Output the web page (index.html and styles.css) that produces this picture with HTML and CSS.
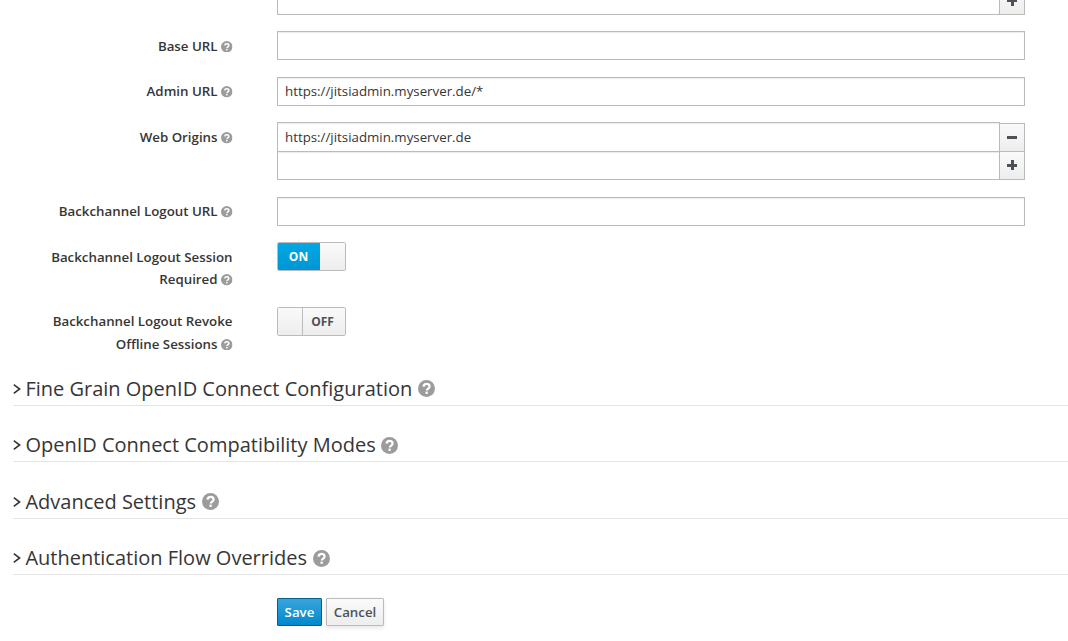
FILE: index.html
```html
<!DOCTYPE html>
<html lang="en">

<head>
    <meta charset="UTF-8">
    <title>Client settings</title>
    <link rel="stylesheet" href="styles.css">
</head>

<body>
    <svg class="defs" width="0" height="0">
        <symbol id="help" viewBox="0 0 24 24">
            <circle cx="12" cy="12" r="12" fill="#9c9c9c" />
            <path d="M7.8 9.3C8.1 6.9 9.8 5.6 12.1 5.6c2.4 0 4.2 1.4 4.2 3.5 0 1.6-.9 2.4-2 3.1-1.1.7-1.7 1.2-1.7 2.5" fill="none" stroke="#fff" stroke-width="3.2" />
            <rect x="10.6" y="16.4" width="3.2" height="3.2" fill="#fff" />
        </symbol>
        <symbol id="chevron" viewBox="0 0 8 10">
            <path d="M.8.7l5.8 4.3-5.8 4.3" fill="none" stroke="#363636" stroke-width="1.6" />
        </symbol>
    </svg>

    <form class="client_form">
        <div class="form_row row_first">
            <div class="form_label"></div>
            <div class="form_field">
                <div class="multi_line">
                    <input class="text_input" type="text">
                    <button class="line_btn" type="button"><span class="icon_plus"></span></button>
                </div>
            </div>
        </div>

        <div class="form_row row_base">
            <label class="form_label">Base URL <svg class="help"><use href="#help" /></svg></label>
            <div class="form_field"><input class="text_input" type="text"></div>
        </div>

        <div class="form_row">
            <label class="form_label">Admin URL <svg class="help"><use href="#help" /></svg></label>
            <div class="form_field"><input class="text_input" type="text" value="https://jitsiadmin.myserver.de/*"></div>
        </div>

        <div class="form_row">
            <label class="form_label">Web Origins <svg class="help"><use href="#help" /></svg></label>
            <div class="form_field">
                <div class="multi_line">
                    <input class="text_input input_raised" type="text" value="https://jitsiadmin.myserver.de">
                    <button class="line_btn" type="button"><span class="icon_minus"></span></button>
                </div>
                <div class="multi_line">
                    <input class="text_input" type="text">
                    <button class="line_btn" type="button"><span class="icon_plus"></span></button>
                </div>
            </div>
        </div>

        <div class="form_row row_last_input">
            <label class="form_label">Backchannel Logout URL <svg class="help"><use href="#help" /></svg></label>
            <div class="form_field"><input class="text_input" type="text"></div>
        </div>

        <div class="form_row row_toggle row_toggle_first">
            <label class="form_label">Backchannel Logout Session Required <svg class="help"><use href="#help" /></svg></label>
            <div class="form_field">
                <div class="toggle">
                    <span class="toggle_on">ON</span>
                    <span class="toggle_knob"></span>
                </div>
            </div>
        </div>

        <div class="form_row row_toggle">
            <label class="form_label">Backchannel Logout Revoke Offline Sessions <svg class="help"><use href="#help" /></svg></label>
            <div class="form_field">
                <div class="toggle">
                    <span class="toggle_knob knob_left"></span>
                    <span class="toggle_off">OFF</span>
                </div>
            </div>
        </div>

        <h2 class="section_title"><svg class="chevron"><use href="#chevron" /></svg>Fine Grain OpenID Connect Configuration <svg class="help_big"><use href="#help" /></svg></h2>
        <h2 class="section_title"><svg class="chevron"><use href="#chevron" /></svg>OpenID Connect Compatibility Modes <svg class="help_big"><use href="#help" /></svg></h2>
        <h2 class="section_title"><svg class="chevron"><use href="#chevron" /></svg>Advanced Settings <svg class="help_big"><use href="#help" /></svg></h2>
        <h2 class="section_title"><svg class="chevron"><use href="#chevron" /></svg>Authentication Flow Overrides <svg class="help_big"><use href="#help" /></svg></h2>

        <div class="form_buttons">
            <button class="btn btn_save" type="button">Save</button>
            <button class="btn btn_cancel" type="button">Cancel</button>
        </div>
    </form>
</body>

</html>
```

FILE: styles.css
```css
* {
    box-sizing: border-box;
    padding: 0;
    margin: 0;
}

html,
body {
    height: 641px;
    overflow: hidden;
}

body {
    background: #fff;
    color: #363636;
    font-family: "Open Sans", "Liberation Sans", sans-serif;
    font-size: 13.3px;
}

.defs {
    position: absolute;
}

.client_form {
    margin-top: -14px;
    padding-left: 13px;
}

.form_row {
    display: flex;
    margin-bottom: 17px;
}

.row_first {
    margin-bottom: 16.4px;
}

.row_base {
    margin-bottom: 16.6px;
}

.row_last_input {
    margin-bottom: 16.4px;
}

.row_toggle {
    margin-bottom: 0;
    height: 65px;
}

.row_toggle_first {
    height: 64.6px;
}

.form_label {
    width: 219.5px;
    padding-top: 3.4px;
    font-weight: 600;
    line-height: 22.5px;
    text-align: right;
    color: #363636;
}

.form_field {
    width: 748px;
    margin-left: 44.5px;
}

.text_input {
    display: block;
    width: 100%;
    height: 29px;
    padding: 2px 7px;
    border: 1px solid #bbb;
    background: #fff;
    box-shadow: inset 0 1px 1px rgba(3, 3, 3, 0.08);
    color: #363636;
    font-family: inherit;
    font-size: 13.3px;
    outline: none;
}

.multi_line {
    display: flex;
}

.multi_line + .multi_line {
    margin-top: -1px;
}

.multi_line .text_input {
    flex: 1;
}

.multi_line .input_raised {
    height: 30px;
    margin-top: -1px;
}

.line_btn {
    display: flex;
    align-items: center;
    justify-content: center;
    width: 26px;
    height: 29px;
    margin-left: -1px;
    border: 1px solid #bbb;
    background: linear-gradient(#fafafa, #ededed);
}

.icon_plus,
.icon_minus {
    position: relative;
    display: block;
    width: 10px;
    height: 3px;
    background: #4d5258;
}

.icon_plus:after {
    content: '';
    position: absolute;
    left: 3.5px;
    top: -3.5px;
    width: 3px;
    height: 10px;
    background: #4d5258;
}

.help {
    width: 11.5px;
    height: 11.5px;
    vertical-align: -1.5px;
}

.toggle {
    display: flex;
    width: 69px;
    height: 29px;
    border: 1px solid #bbb;
    border-radius: 2px;
    overflow: hidden;
    font-size: 12px;
    font-weight: 700;
}

.toggle_on {
    width: 43px;
    margin: -1px 0 -1px -1px;
    background: linear-gradient(#00a9e4, #0095d4);
    color: #fff;
    line-height: 29px;
    text-align: center;
}

.toggle_off {
    flex: 1;
    padding-right: 3px;
    background: linear-gradient(#fafafa, #ededed);
    color: #4d5258;
    line-height: 27px;
    text-align: center;
}

.toggle_knob {
    flex: 1;
    background: linear-gradient(#fafafa, #ededed);
}

.knob_left {
    flex: none;
    width: 25px;
    border-right: 1px solid #bbb;
}

.section_title {
    display: flex;
    align-items: center;
    height: 30px;
    margin-bottom: 26.4px;
    padding-bottom: 3px;
    border-bottom: 1px solid #e4e4e4;
    color: #363636;
    font-size: 20px;
    font-weight: 400;
    line-height: 28px;
    white-space: pre;
}

.form_row + .section_title {
    margin-top: 4px;
}

.chevron {
    width: 8px;
    height: 10px;
    margin-right: 4.4px;
}

.help_big {
    width: 17px;
    height: 17px;
    margin-left: 0.6px;
}

.form_buttons {
    display: flex;
    gap: 4px;
    margin-left: 264px;
    margin-top: -4px;
}

.btn {
    height: 28px;
    border: 1px solid #bbb;
    border-radius: 1px;
    font-family: inherit;
    font-size: 13.3px;
    font-weight: 600;
}

.btn_save {
    width: 45px;
    border-color: #00618a;
    background: linear-gradient(#39a5dc, #0088ce);
    color: #fff;
}

.btn_cancel {
    width: 58px;
    background: linear-gradient(#fafafa, #ededed);
    color: #4d5258;
    box-shadow: 0 2px 4px rgba(0, 0, 0, 0.1);
}
```
